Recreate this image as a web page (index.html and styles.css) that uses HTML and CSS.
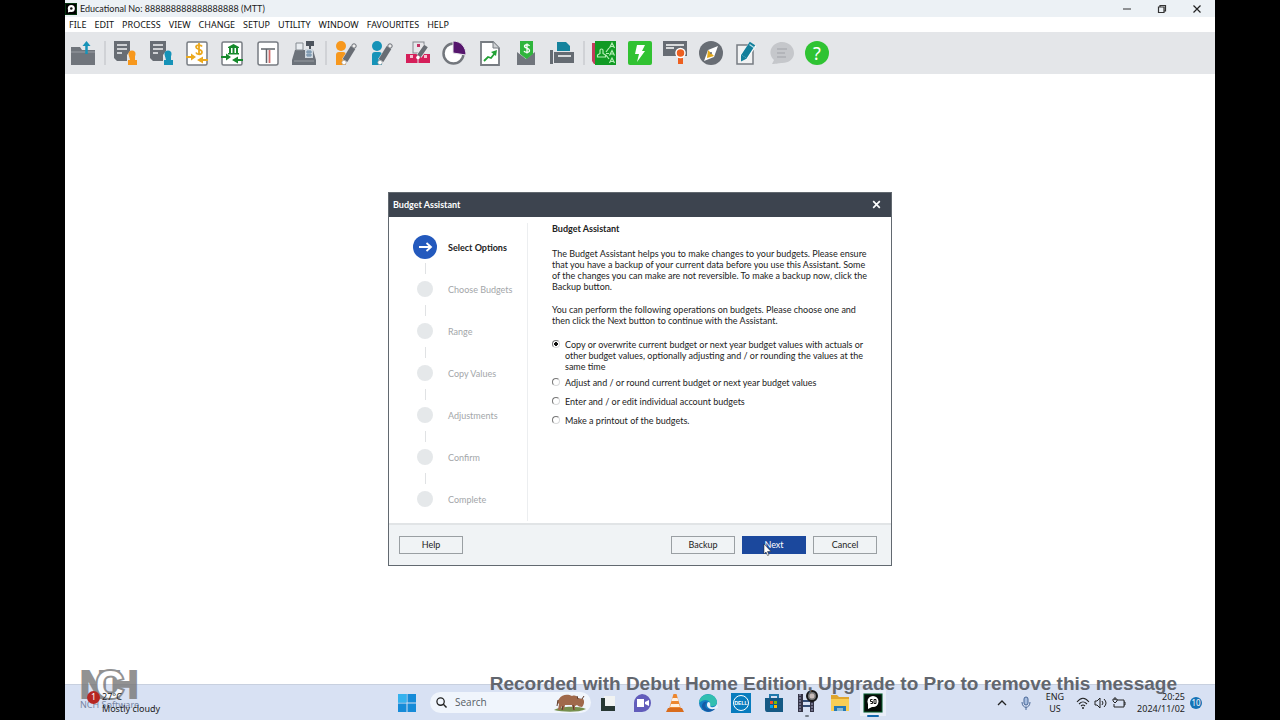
FILE: index.html
```html
<!DOCTYPE html>
<html lang="en">
<head>
<meta charset="utf-8">
<title>Budget Assistant</title>
<link rel="stylesheet" href="styles.css">
</head>
<body>
<div class="screen">
  <header class="titlebar">
    <svg class="app-icon" viewBox="0 0 12 12"><rect width="12" height="12" fill="#04330f"/><rect x="1" y="1" width="10" height="10" fill="#000"/><circle cx="6.300" cy="5.500" r="3.500" fill="#fff"/><path d="M3 7v2.500l3-1z" fill="#fff"/><circle cx="6.300" cy="5.500" r="1.300" fill="#111"/></svg>
    <span class="title">Educational No: 888888888888888888 (MTT)</span>
    <div class="window-controls">
      <button type="button" aria-label="Minimise"><svg viewBox="0 0 10 10"><path d="M1 5h8" stroke="#333" fill="none"/></svg></button>
      <button type="button" aria-label="Restore"><svg viewBox="0 0 10 10"><path d="M1.500 3h5.500v5.500H1.500zM3 3V1.500h5.500V7H7" stroke="#333" stroke-width="1.200" fill="none"/></svg></button>
      <button type="button" aria-label="Close"><svg viewBox="0 0 10 10"><path d="M1.500 1.500l7 7M8.500 1.500l-7 7" stroke="#222" stroke-width="1.200" fill="none"/></svg></button>
    </div>
  </header>
  <nav class="menu">
    <button type="button">FILE</button><button type="button">EDIT</button><button type="button">PROCESS</button><button type="button">VIEW</button><button type="button">CHANGE</button><button type="button">SETUP</button><button type="button">UTILITY</button><button type="button">WINDOW</button><button type="button">FAVOURITES</button><button type="button">HELP</button>
  </nav>
  <div class="toolbar">
    <div class="tools">
      <button type="button" aria-label="Open company"><svg viewBox="0 0 24 24"><path d="M0 6h9l2 3h13v15H0z" fill="#70757c"/><path d="M0 11h24" stroke="#999ea3"/><path d="M15.500 13V4" stroke="#1693b8" stroke-width="2.500"/><path d="M11.500 5l4-5 4 5z" fill="#1693b8"/></svg></button>
    </div>
    <div class="tools tools-process">
      <button type="button" aria-label="Customer documents"><svg viewBox="0 0 24 24"><path d="M1 0h16v10l-3 4v6H4l-3-3z" fill="#686d74"/><path d="M4 4h10M4 8h10M4 12h5" stroke="#f1f2f3" stroke-width="1.500"/><circle cx="19" cy="13" r="3.500" fill="#f7981d"/><path d="M16 15h6v4h2v5h-9v-5h2z" fill="#f7981d"/></svg></button>
      <button type="button" aria-label="Supplier documents"><svg viewBox="0 0 24 24"><path d="M1 0h16v10l-3 4v6H4l-3-3z" fill="#686d74"/><path d="M4 4h10M4 8h10M4 12h5" stroke="#f1f2f3" stroke-width="1.500"/><circle cx="19" cy="13" r="3.500" fill="#1693b8"/><path d="M16 15h6v4h2v5h-9v-5h2z" fill="#1693b8"/></svg></button>
      <button type="button" aria-label="Cash journals"><svg viewBox="0 0 24 24"><rect x="2" y="1" width="20" height="23" rx="1.500" fill="#fff" stroke="#777c82" stroke-width="1.500"/><path d="M17 5.500c-1-2-6-2-6 .5s6 2 6 5-5 3-6 .500M14 2v12" stroke="#eca91d" stroke-width="1.800" fill="none"/><path d="M1 16h6M17 19h6" stroke="#eca91d" stroke-width="2"/><path d="M6 12.500l5 3.500-5 3.500zM18 15.500v7L12 19z" fill="#eca91d"/></svg></button>
      <button type="button" aria-label="Bank journals"><svg viewBox="0 0 24 24"><rect x="2" y="1" width="20" height="23" rx="1.500" fill="#fff" stroke="#777c82" stroke-width="1.500"/><path d="M8 6l5.500-3L19 6v1H8zM8 12h11v1.500H8zM9 7h2v5H9zM12.500 7h2v5h-2zM16 7h2v5h-2z" fill="#168a2c"/><path d="M1 16h6M17 19h6" stroke="#168a2c" stroke-width="2"/><path d="M6 12.500l5 3.500-5 3.500zM18 15.500v7L12 19z" fill="#168a2c"/></svg></button>
      <button type="button" aria-label="T account"><svg viewBox="0 0 24 24"><rect x="2" y="1" width="20" height="23" rx="2" fill="#fff" stroke="#777c82" stroke-width="1.500"/><path d="M5 8h14M10.500 8v14" stroke="#60656b" stroke-width="1.500" fill="none"/><path d="M13.500 9v13" stroke="#d06b6b" stroke-width="1.800"/></svg></button>
      <button type="button" aria-label="Point of sale"><svg viewBox="0 0 24 24"><path d="M14 0h8v5h-3v3h-2V5h-3z" fill="#4d545d"/><path d="M3 9h18l3 10v5H0v-5z" fill="#6c727a"/><path d="M4 2h7v7H4z" fill="#e9edf1" stroke="#858b91"/><path d="M13 8h8v9h-8z" fill="#ced7df"/><path d="M14 11h6M14 14h6M16 9v7M18 9v7" stroke="#6989a5"/><path d="M2 20h20" stroke="#969ba1"/></svg></button>
    </div>
    <div class="tools tools-edit">
      <button type="button" aria-label="Edit customers"><svg viewBox="0 0 24 24"><circle cx="7" cy="5" r="5" fill="#f7981d"/><path d="M2 14q0-3 3-3h4q3 0 3 3v10H2z" fill="#f7981d"/><path d="M11 20L20 6" stroke="#e4e6e9" stroke-width="7"/><path d="M11 19.500L19 6.500" stroke="#686d74" stroke-width="5.500"/><circle cx="20" cy="5" r="2.200" fill="#eee" stroke="#686d74"/><circle cx="10" cy="21.500" r="2.200" fill="#fff" stroke="#999" stroke-width=".6"/></svg></button>
      <button type="button" aria-label="Edit suppliers"><svg viewBox="0 0 24 24"><circle cx="7" cy="5" r="5" fill="#1693b8"/><path d="M2 14q0-3 3-3h4q3 0 3 3v10H2z" fill="#1693b8"/><path d="M11 20L20 6" stroke="#e4e6e9" stroke-width="7"/><path d="M11 19.500L19 6.500" stroke="#686d74" stroke-width="5.500"/><circle cx="20" cy="5" r="2.200" fill="#eee" stroke="#686d74"/><circle cx="10" cy="21.500" r="2.200" fill="#fff" stroke="#999" stroke-width=".6"/></svg></button>
      <button type="button" aria-label="Edit inventory"><svg viewBox="0 0 24 24"><rect x="7" y="1" width="11" height="11" fill="#e7e7ea" stroke="#858990"/><path d="M11 3h3v3h-3z" fill="#c43264"/><path d="M0 13h11.500v9H0zM12.500 13H24v9H12.500z" fill="#d51f5a"/><path d="M4 14h3v3H4zM18 14h3v3h-3z" fill="#f5bfd0"/><path d="M13 15L20 5" stroke="#eee" stroke-width="6"/><path d="M13 15L20 5" stroke="#686d74" stroke-width="4.500"/><circle cx="12" cy="16.500" r="1.800" fill="#fff"/></svg></button>
      <button type="button" aria-label="Analysis"><svg viewBox="0 0 24 24"><circle cx="11.500" cy="12.500" r="10" fill="#fff" stroke="#73777d" stroke-width="2.500"/><path d="M11 0c8 0 13 6 13 14l-13-2z" fill="#56166d" stroke="#e6e7ea"/></svg></button>
      <button type="button" aria-label="Reports"><svg viewBox="0 0 24 24"><path d="M3 1h12l6 6v17H3z" fill="#fff" stroke="#777c82" stroke-width="1.800"/><path d="M15 1v6h6" fill="#cfd1d4" stroke="#777c82"/><path d="M6 20l4-4 3 1 4-5" fill="none" stroke="#22a235" stroke-width="1.800"/><path d="M13 11l6-2-1 6z" fill="#22a235"/></svg></button>
      <button type="button" aria-label="Payments"><svg viewBox="0 0 24 24"><path d="M3 11l9 7 9-7v13H3z" fill="#70757c"/><path d="M6 0h13v13l-6.500 5L6 13z" fill="#2fb53c"/><path d="M15.500 5c-1-2-5.500-1.500-5 .5s5 1.500 5 4-4.500 2.500-5.500.5M13 2.500v10" fill="none" stroke="#fff" stroke-width="1.300"/></svg></button>
      <button type="button" aria-label="Print"><svg viewBox="0 0 24 24"><path d="M7 1h9l4 4v5H7z" fill="#15839d"/><path d="M0 9h3v14H0zM4 11h20v11H4z" fill="#656b72"/><path d="M8 15h13" stroke="#fff" stroke-width="1.500"/></svg></button>
    </div>
    <div class="tools tools-extra">
      <button type="button" aria-label="Contacts"><svg viewBox="0 0 24 24"><path d="M0 2h4v21H2l-2-3z" fill="#c33b5c"/><path d="M3 0h21v24H3z" fill="#119a24"/><path d="M5.500 16h8v-2l-2.500-1.500V9.500a1.500 1.500 0 00-3 0v3L5.500 14zM14 11l3-4M14 12.500h3M14 14l3 4M17.500 7l2.500-5 2.500 5M18.500 5.500h3M17.500 14.500L20 9.500l2.500 5M18.500 13h3M17.500 22l2.500-5 2.500 5M18.500 20.500h3" fill="none" stroke="#b5efb5" stroke-width="1.200"/></svg></button>
      <button type="button" aria-label="Quick actions"><svg viewBox="0 0 24 24"><rect width="24" height="24" rx="2" fill="#31c232"/><path d="M9 4h8l-3 6h3L9 21l2-8H7z" fill="#fff"/></svg></button>
      <button type="button" aria-label="Certificate"><svg viewBox="0 0 24 24"><path d="M0 0h24v15H0z" fill="#676c73"/><path d="M3 4h18M3 7h8" stroke="#fff" stroke-width="1.500"/><path d="M15 16h5v7h-5z" fill="#ed6020"/><circle cx="17.500" cy="12" r="4.500" fill="#ed6020" stroke="#fff" stroke-width="1.500"/></svg></button>
      <button type="button" aria-label="Navigator"><svg viewBox="0 0 24 24"><circle cx="12" cy="12" r="12" fill="#686d74"/><path d="M19 5l-4 11-10 4L9 9z" fill="#fff"/><path d="M9 9l6 6-7 2z" fill="#e3a91b"/><circle cx="12" cy="12" r="1" fill="#686d74"/></svg></button>
      <button type="button" aria-label="Notes"><svg viewBox="0 0 24 24"><path d="M3 4h16v19H3z" fill="#f1f2f3" stroke="#777c82" stroke-width="1.500"/><path d="M9 17L19 3" stroke="#fff" stroke-width="8"/><path d="M10 15.500L18.500 2.500" stroke="#137f9b" stroke-width="6.500"/><path d="M7 13.500l6 4-6 3z" fill="#137f9b"/><path d="M15.500 3.500l5 3.500" stroke="#bde3eb" stroke-width="1.200"/></svg></button>
      <button type="button" aria-label="Messages"><svg viewBox="0 0 24 24"><path d="M12 1c7 0 12 5 12 11s-5 10-12 10c-3 0-5 1-10 1l2-4C-4 11 3 1 12 1z" fill="#c5c7cb"/><path d="M7 8h10M7 12h8M7 16h9" stroke="#adb0b5" stroke-width="1.300"/></svg></button>
      <button type="button" class="help-tool" aria-label="Online help">?</button>
    </div>
  </div>

  <main class="workspace">
    <section class="dialog" role="dialog" aria-labelledby="dialog-title">
      <header class="dialog-title">
        <h1 id="dialog-title">Budget Assistant</h1>
        <button type="button" aria-label="Close dialog"><svg viewBox="0 0 10 10"><path d="M2 2l6 6M8 2l-6 6" stroke="#fff" stroke-width="1.500"/></svg></button>
      </header>
      <div class="dialog-body">
        <ol class="steps">
          <li class="current"><span class="dot"><svg viewBox="0 0 24 24"><path d="M6 12h12M13.500 8l4.500 4-4.500 4" fill="none" stroke="#fff" stroke-width="1.800"/></svg></span>Select Options</li>
          <li><span class="dot"></span>Choose Budgets</li>
          <li><span class="dot"></span>Range</li>
          <li><span class="dot"></span>Copy Values</li>
          <li><span class="dot"></span>Adjustments</li>
          <li><span class="dot"></span>Confirm</li>
          <li><span class="dot"></span>Complete</li>
        </ol>
        <div class="content">
          <h2>Budget Assistant</h2>
          <p>The Budget Assistant helps you to make changes to your budgets. Please ensure<br>that you have a backup of your current data before you use this Assistant. Some<br>of the changes you can make are not reversible. To make a backup now, click the<br>Backup button.</p>
          <p>You can perform the following operations on budgets. Please choose one and<br>then click the Next button to continue with the Assistant.</p>
          <div class="options">
            <label><input type="radio" name="operation" checked><span>Copy or overwrite current budget or next year budget values with actuals or<br>other budget values, optionally adjusting and / or rounding the values at the<br>same time</span></label>
            <label><input type="radio" name="operation"><span>Adjust and / or round current budget or next year budget values</span></label>
            <label><input type="radio" name="operation"><span>Enter and / or edit individual account budgets</span></label>
            <label><input type="radio" name="operation"><span>Make a printout of the budgets.</span></label>
          </div>
        </div>
      </div>
      <footer class="dialog-actions">
        <button type="button" class="help">Help</button>
        <button type="button">Backup</button>
        <button type="button" class="primary">Next<svg class="cursor" viewBox="0 0 8 12"><path d="M1 0v10l2-2 1.500 3.500L6 11 4.500 7.500H8z" fill="#fff" stroke="#222" stroke-width=".5"/></svg></button>
        <button type="button">Cancel</button>
      </footer>
    </section>
  </main>

  <footer class="taskbar">
    <div class="weather"><span class="alert">1</span><div>27°C<br>Mostly cloudy</div></div>
    <div class="apps">
      <button type="button" aria-label="Start"><svg viewBox="0 0 20 20"><path d="M1 1h8.500v8.500H1zM10.500 1H19v8.500h-8.500zM1 10.500h8.500V19H1zM10.500 10.500H19V19h-8.500z" fill="#168bd8"/><path d="M1 1h8.500v8.500H1z" fill="#35b2ee"/></svg></button>
      <label class="search"><svg viewBox="0 0 12 12"><circle cx="5" cy="5" r="4" fill="none" stroke="#222" stroke-width="1.400"/><path d="M8 8l3.500 3.500" stroke="#222" stroke-width="1.600"/></svg><input type="text" placeholder="Search" aria-label="Search"><svg class="bison" viewBox="0 0 34 18"><path d="M1 16c7-4 25-4 32-1-8 4-24 3-32 1z" fill="#768f4d"/><path d="M6 5c3-5 9-5 13-3 3-1 5 0 6 2l5 1c2 2 1 6-1 8-2 0-4-1-5-2l-2 1v4h-2l-1-5h-7l-1 5H9v-4l-2 4H5l1-6C4 9 4 7 6 5z" fill="#a0694b"/><path d="M25 5l-1-3M29 5l2-3M5 6l-1 6M10 12l-1 4M20 11l1 5" stroke="#5c3a2a" fill="none"/></svg></label>
      <button type="button" aria-label="Task view"><svg viewBox="0 0 20 20"><path d="M5 3h11v10H5z" fill="#f1f3f2"/><path d="M2 5h4v8h10v5H2z" fill="#273732"/></svg></button>
      <button type="button" aria-label="Chat"><svg viewBox="0 0 20 20"><path d="M10 1a9 9 0 110 18H2V10a9 9 0 018-9z" fill="#625dbb"/><path d="M5 6h7v8H5zM13 9l4-2v6l-4-2z" fill="#fff"/></svg></button>
      <button type="button" aria-label="Media player"><svg viewBox="0 0 20 20"><path d="M8.500 1h3L16 16H4z" fill="#ed862d"/><path d="M7.500 5h5l1 3h-7zM6 11h8l1 3H5z" fill="#fff0e0"/><path d="M3 15h14l2 4H1z" fill="#d96c1c"/></svg></button>
      <button type="button" aria-label="Edge"><svg viewBox="0 0 20 20"><circle cx="10" cy="10" r="9" fill="#147fc5"/><path d="M1 10C2-2 18-1 19 9c0 4-4 5-7 4 2-5-5-9-11-3z" fill="#31bfb0"/><path d="M9 9c-4 4-1 9 8 7-6 6-14 1-13-4 1-3 3-4 5-3z" fill="#165aa5"/><path d="M10 9c4 0 1 4 3 5 3 1 5-1 6-3l1 4-4 1c-5 1-9-3-6-7z" fill="#e9f2fb"/></svg></button>
      <button type="button" class="dell" aria-label="Dell"><span>DELL</span></button>
      <button type="button" aria-label="Store"><svg viewBox="0 0 20 20"><path d="M6 5V2h8v3" fill="none" stroke="#2179ac" stroke-width="2"/><path d="M1 5h18v14H3q-2 0-2-3z" fill="#155984"/><path d="M6 8h3v3H6z" fill="#f25022"/><path d="M10 8h3v3h-3z" fill="#7fba00"/><path d="M6 12h3v3H6z" fill="#00a4ef"/><path d="M10 12h3v3h-3z" fill="#ffb900"/></svg></button>
      <button type="button" class="running" aria-label="Debut recorder"><svg viewBox="0 0 20 20"><path d="M1 1h5v18H1zM13 1h4v18h-4z" fill="#343446"/><path d="M6 8h7M6 13h7" stroke="#344d76" stroke-width="2"/><path d="M3 1v18M15 10v9" stroke="#aaaaca" stroke-dasharray="2 1"/><circle cx="15" cy="3" r="5" fill="#777" stroke="#161616" stroke-width="2"/><circle cx="15" cy="3" r="2.500" fill="#c7bbb9"/></svg></button>
      <button type="button" aria-label="File explorer"><svg viewBox="0 0 20 20"><path d="M1 2h6l2 2h10v13H1z" fill="#dfa52e"/><path d="M1 6h18v12H1z" fill="#f8ce55"/><path d="M4 13h12v5H4z" fill="#2378b5"/><path d="M7 15h6v3H7z" fill="#8abad5"/></svg></button>
      <button type="button" class="active" aria-label="Accounting"><svg viewBox="0 0 20 20"><rect x="1" y="1" width="18" height="18" fill="#050b08" stroke="#096028"/><circle cx="10" cy="8.500" r="5.500" fill="#fff"/><path d="M5 10v6l6-3z" fill="#fff"/><path d="M9.500 6.500h-2v2h2v2h-2M11 6.500h2v4h-2z" fill="none" stroke="#111"/></svg></button>
    </div>
    <div class="tray">
      <svg class="chevron" viewBox="0 0 14 14"><path d="M3 9l4-4 4 4" stroke="#222" stroke-width="1.300" fill="none"/></svg>
      <svg class="mic" viewBox="0 0 14 14"><rect x="5" y="1" width="4" height="8" rx="2" fill="#a6bde0" stroke="#486696"/><path d="M3 6c0 7 8 7 8 0M7 11v3" fill="none" stroke="#486696"/></svg>
      <div class="language">ENG<br>US</div>
      <svg class="wifi" viewBox="0 0 14 14"><path d="M1 6c4-5 8-5 12 0M3 8c3-3 5-3 8 0M5 10c1.500-1.500 2.500-1.500 4 0" fill="none" stroke="#222" stroke-width="1.100"/><circle cx="7" cy="12" r="1" fill="#222"/></svg>
      <svg class="sound" viewBox="0 0 14 14"><path d="M2 5h2l3-3v10L4 9H2zM9 5q2 2 0 4M11 3q4 4 0 8" fill="none" stroke="#222"/></svg>
      <svg class="battery" viewBox="0 0 14 14"><path d="M5 4h7v7H2V8M12 6h1v3h-1M3 1v3M1 3h4v2L3 7 1 5z" fill="none" stroke="#222"/></svg>
      <div class="clock">20:25<br>2024/11/02</div>
      <span class="notifications">10</span>
    </div>
  </footer>

  <div class="brand"><svg viewBox="0 0 60 30"><g class="brand-letters"><text x="0" y="29">N</text><text x="31" y="29">H</text><text class="brand-c" x="16" y="29">C</text></g></svg><span>NCH Software</span></div>
  <div class="watermark">Recorded with Debut Home Edition, Upgrade to Pro to remove this message</div>
</div>
</body>
</html>
```
FILE: styles.css
```css
* { box-sizing: border-box; }
body {
  margin: 0;
  background: #000;
  color: #222;
  font: 9px/11px "Noto Sans", "Open Sans", sans-serif;
}
button, input { font: inherit; color: inherit; }
button { padding: 0; border: 0; background: none; }
svg { display: block; overflow: visible; }

.screen {
  position: relative;
  display: flex;
  flex-direction: column;
  min-height: 100vh;
  margin: 0 65px;
  background: #fff;
}
.titlebar {
  display: flex;
  align-items: center;
  gap: 3px;
  height: 17px;
  background: #ecf1f5;
}
.title { font-family: Lato, sans-serif; }
.app-icon { width: 12px; height: 12px; }
.window-controls { display: flex; gap: 25px; margin-left: auto; padding-right: 13px; }
.window-controls svg { width: 10px; height: 10px; }
.menu { display: flex; gap: 8px; height: 15px; padding-left: 4px; color: #111; }

.toolbar {
  display: flex;
  align-items: center;
  height: 42px;
  padding-left: 6px;
  background: #e4e6e9;
}
.tools { display: flex; justify-content: space-between; }
.tools + .tools { margin-left: 9px; padding-left: 7px; border-left: 2px solid #d0d2d6; }
.tools button, .tools svg { width: 24px; height: 24px; }
.tools-process { width: 212px; }
.tools-edit { width: 249px; }
.tools-extra { width: 246px; }
.tools .help-tool {
  border-radius: 50%;
  background: #2fc333;
  color: #fff;
  font-size: 18px;
  line-height: 24px;
}

.workspace { display: grid; flex: 1; place-items: center; }
.dialog {
  width: 504px;
  border: 1px solid #626970;
  background: #fff;
  font-family: Lato, sans-serif;
}
.dialog-title {
  display: flex;
  align-items: center;
  justify-content: space-between;
  height: 24px;
  padding: 0 9px 2px 4px;
  background: #3d444f;
  color: #fff;
}
.dialog-title svg { width: 11px; height: 11px; }
h1, h2 { margin: 0; font: inherit; font-weight: 700; }
.dialog-body { display: flex; padding: 6px 0 2px; }
.steps {
  display: flex;
  flex-direction: column;
  gap: 18px;
  width: 139px;
  margin: 0;
  padding: 12px 0 10px 24px;
  border-right: 1px solid #eceef0;
  list-style: none;
  color: #a3a6a9;
}
.steps li { position: relative; display: flex; align-items: center; gap: 11px; height: 24px; }
.steps li + li::before {
  content: "";
  position: absolute;
  left: 12px;
  top: -14px;
  width: 1px;
  height: 11px;
  background: #e0e2e4;
}
.dot { width: 16px; height: 16px; margin: 0 4px; border-radius: 50%; background: #e5e8ea; }
.current { color: #222; font-weight: 700; }
.current .dot { width: 24px; height: 24px; margin: 0; background: #2359bd; }
.content { flex: 1; padding-left: 24px; white-space: nowrap; }
.content p { margin: 12px 0; }
.content h2 + p { margin-top: 14px; }
.options { display: grid; gap: 5px; margin-top: 13px; }
.options label { display: flex; gap: 5px; min-height: 14px; }
.options input {
  flex: none;
  width: 8px;
  height: 8px;
  margin: 1px 0 0;
  appearance: none;
  border: 1px solid #d9dadb;
  border-top-color: #777;
  border-left-color: #777;
  border-radius: 50%;
}
.options input:checked { background: radial-gradient(circle, #111 0 2px, #fff 2px); }
.dialog-actions {
  display: flex;
  align-items: center;
  gap: 7px;
  height: 42px;
  padding: 0 14px 0 10px;
  border-top: 2px solid #e1e4e6;
  background: #f0f3f5;
}
.dialog-actions button {
  position: relative;
  width: 64px;
  height: 18px;
  padding-bottom: 1px;
  border: 1px solid #9a9fa3;
}
.dialog-actions .help { margin-right: auto; }
.dialog-actions .primary { border-color: #1b489d; background: #1b489d; color: #fff; }
.cursor { position: absolute; left: 20px; top: 7px; width: 8px; height: 12px; }

.taskbar {
  display: grid;
  grid-template-columns: 1fr auto 1fr;
  align-items: center;
  height: 36px;
  border-top: 1px solid #c8d0df;
  background: #d8e1f3;
}
.weather {
  position: relative;
  z-index: 1;
  display: flex;
  gap: 2px;
  padding-left: 22px;
  line-height: 12px;
}
.alert {
  width: 13px;
  height: 13px;
  border-radius: 50%;
  background: #b62622;
  color: #fff;
  text-align: center;
}
.apps { display: flex; align-items: center; gap: 13px; }
.apps button { position: relative; width: 20px; height: 20px; }
.search {
  display: flex;
  align-items: center;
  gap: 8px;
  width: 161px;
  height: 21px;
  margin-right: -5px;
  padding: 0 4px 0 6px;
  border-radius: 11px;
  background: #f0f5fc;
}
.search svg { flex: none; width: 11px; height: 11px; }
.search .bison { width: 34px; height: 18px; }
.search input {
  flex: 1;
  width: 0;
  min-width: 0;
  padding: 0;
  border: 0;
  outline: 0;
  background: none;
  font-family: "Open Sans", sans-serif;
  font-size: 10px;
}
.search input::placeholder { color: #555b64; opacity: 1; }
.dell { background: #087cbe; color: #fff; font: 700 5px/14px "Liberation Sans", sans-serif; }
.dell span { display: block; margin: 2px; border: 1px solid #fff; border-radius: 50%; }
.active { outline: 3px solid #e9eef8; }
.active::after, .running::after {
  content: "";
  position: absolute;
  left: 4px;
  bottom: -4px;
  width: 12px;
  height: 2px;
  border-radius: 1px;
  background: #1269af;
}
.running::after { left: 8px; width: 4px; background: #777f8b; }
.tray { display: flex; align-items: center; justify-content: flex-end; padding-right: 13px; line-height: 12px; }
.tray svg { width: 14px; height: 14px; }
.mic { margin: 0 13px 0 10px; }
.language { margin-right: 12px; text-align: center; }
.sound { margin: 0 5px 0 3px; }
.clock { margin: 0 5px 0 11px; text-align: right; }
.notifications {
  width: 12px;
  height: 12px;
  border-radius: 50%;
  background: #1673b6;
  color: #fff;
  font-size: 8px;
  text-align: center;
}
.brand { position: absolute; left: 15px; bottom: 10px; color: #5e6f90; opacity: .8; }
.brand svg { width: 60px; height: 30px; }
.brand-letters { fill: #777; stroke: #777; stroke-width: 2; font: 700 38px "Liberation Sans", sans-serif; }
.brand-c { fill: #fff; stroke-width: 4; paint-order: stroke; }
.brand span { display: block; }
.watermark {
  position: absolute;
  right: 38px;
  bottom: 26px;
  color: #62666e;
  font: 700 19px/20px "Liberation Sans", sans-serif;
  white-space: nowrap;
}
```
